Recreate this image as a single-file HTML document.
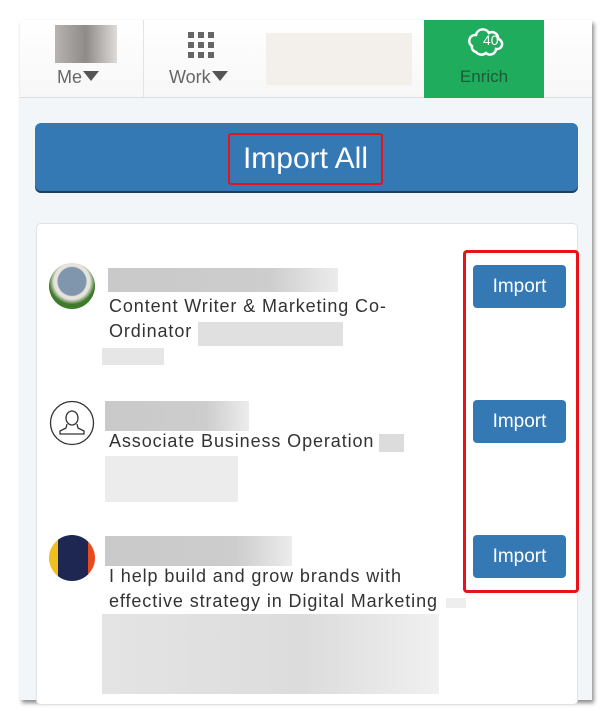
<!DOCTYPE html>
<html><head><style>
body{margin:0;width:614px;height:719px;background:#fff;position:relative;overflow:hidden;font-family:"Liberation Sans",sans-serif}
.a{position:absolute}
.panel{left:20px;top:20px;width:572px;height:680px;background:#f3f6f9;box-shadow:2px 3px 4px rgba(0,0,0,.45)}
.hdr{left:20px;top:20px;width:572px;height:77px;background:linear-gradient(#fff,#f7f7f7);border-bottom:1px solid #ddd}
.blur{background:linear-gradient(90deg,#c9c9c9,#cdcdcd 70%,#ececec)}
.t{color:#333;font-size:18px;line-height:25px;letter-spacing:0.9px}
.btn{background:#3478b4;color:#fff;border-radius:4px;font-size:19px;text-align:center;line-height:43px;width:93px;height:43px;left:473px}
.tri{display:inline-block;width:0;height:0;border-left:8px solid transparent;border-right:8px solid transparent;border-top:10px solid #555;margin-left:1px;vertical-align:2px}
</style></head><body>
<div class="a panel"></div>
<div class="a hdr"></div>
<div class="a" style="left:55px;top:25px;width:62px;height:38px;background:linear-gradient(90deg,#b8b3b0,#8f8b89 50%,#dedcda)"></div>
<div class="a" style="left:57px;top:67px;font-size:18px;color:#666">Me<span class="tri"></span></div>
<div class="a" style="left:143px;top:20px;width:1px;height:77px;background:#e3e3e3"></div>
<svg class="a" style="left:188px;top:32px" width="30" height="30"><g fill="#666"><rect x="0" y="0" width="6" height="6"/><rect x="10" y="0" width="6" height="6"/><rect x="20" y="0" width="6" height="6"/><rect x="0" y="10" width="6" height="6"/><rect x="10" y="10" width="6" height="6"/><rect x="20" y="10" width="6" height="6"/><rect x="0" y="20" width="6" height="6"/><rect x="10" y="20" width="6" height="6"/><rect x="20" y="20" width="6" height="6"/></g></svg>
<div class="a" style="left:169px;top:67px;font-size:18px;color:#666">Work<span class="tri"></span></div>
<div class="a" style="left:266px;top:33px;width:146px;height:52px;background:#f3f0eb"></div>
<div class="a" style="left:424px;top:20px;width:120px;height:78px;background:#1fac5c"></div>
<svg class="a" style="left:464px;top:26px" width="44" height="34"><path d="M8 20a6 6 0 0 1 4-11a7 7 0 0 1 13-2a6 6 0 0 1 9 6a5 5 0 0 1-2 10a6 6 0 0 1-10 4a7 7 0 0 1-10-1a5 5 0 0 1-4-6z" fill="none" stroke="#fff" stroke-width="2.5"/><text x="19" y="19" font-size="14" fill="#fff" font-family="Liberation Sans">40</text></svg>
<div class="a" style="left:424px;top:67px;width:120px;text-align:center;font-size:17px;color:#1d5a35">Enrich</div>
<div class="a" style="left:35px;top:123px;width:543px;height:68px;background:#3478b4;border-radius:6px;box-shadow:0 2px 0 #1c3f5e"></div>
<div class="a" style="left:228px;top:133px;width:151px;height:48px;border:2px solid #e8121a;border-radius:3px;color:#fff;font-size:30px;text-align:center;line-height:48px">Import All</div>
<div class="a" style="left:36px;top:223px;width:540px;height:480px;background:#fff;border:1px solid #e2e2e2;border-radius:5px"></div>
<div class="a" style="left:463px;top:250px;width:110px;height:337px;border:3px solid #e8121a;border-radius:4px"></div>
<div class="a" style="left:49px;top:263px;width:46px;height:46px;border-radius:50%;background:radial-gradient(circle at 50% 40%,#7f96ad 14px,#e6e2dc 15px,#e6e2dc 18px,#3d7a2a 23px)"></div>
<div class="a blur" style="left:108px;top:268px;width:230px;height:24px"></div>
<div class="a t" style="left:109px;top:294px">Content Writer &amp; Marketing Co-<br>Ordinator</div>
<div class="a" style="left:198px;top:322px;width:145px;height:24px;background:#e0e0e0"></div>
<div class="a" style="left:102px;top:348px;width:62px;height:17px;background:#e6e6e6"></div>
<div class="a btn" style="top:265px">Import</div>
<svg class="a" style="left:49px;top:400px" width="46" height="46"><circle cx="23" cy="23" r="21.5" fill="#fff" stroke="#333" stroke-width="1.3"/><path d="M23 11a6 7 0 0 1 0 14a6 7 0 0 1 0-14zM18 24l-1 4l-6 3v3h24v-3l-6-3l-1-4" fill="none" stroke="#333" stroke-width="1.3"/></svg>
<div class="a blur" style="left:105px;top:401px;width:144px;height:30px"></div>
<div class="a t" style="left:109px;top:429px">Associate Business Operation</div>
<div class="a" style="left:379px;top:434px;width:25px;height:18px;background:#dcdcdc"></div>
<div class="a" style="left:105px;top:456px;width:133px;height:46px;background:#ececec"></div>
<div class="a btn" style="top:400px">Import</div>
<div class="a" style="left:49px;top:535px;width:46px;height:46px;border-radius:50%;background:linear-gradient(90deg,#f0c020 20%,#1e2752 20%,#1e2752 85%,#e84a1d 85%)"></div>
<div class="a blur" style="left:105px;top:536px;width:187px;height:30px"></div>
<div class="a t" style="left:109px;top:564px">I help build and grow brands with<br>effective strategy in Digital Marketing</div>
<div class="a" style="left:446px;top:598px;width:20px;height:10px;background:#eee"></div>
<div class="a" style="left:102px;top:614px;width:337px;height:80px;background:linear-gradient(90deg,#e4e4e4,#dcdcdc 60%,#f0f0f0)"></div>
<div class="a btn" style="top:535px">Import</div>
</body></html>
